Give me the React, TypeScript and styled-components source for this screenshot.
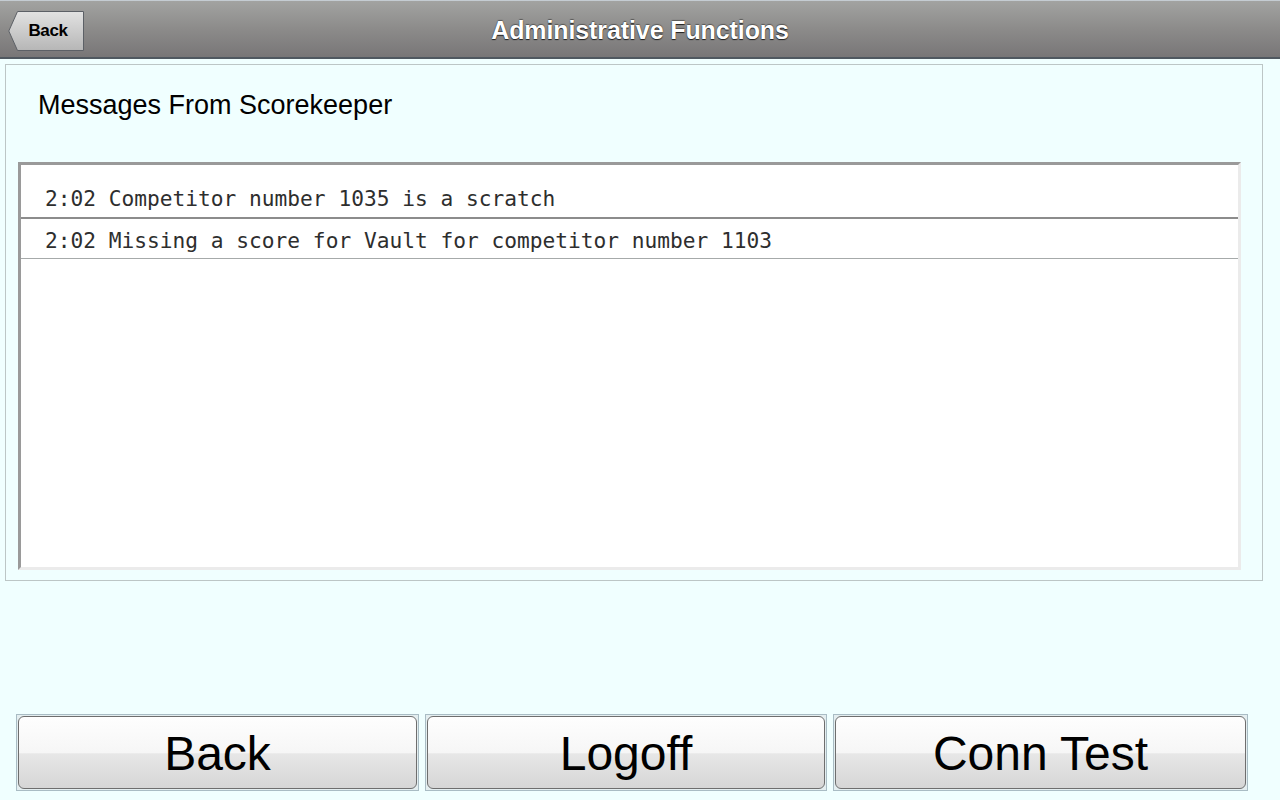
import React from 'react';
import styled, { createGlobalStyle } from 'styled-components';

const GlobalStyle = createGlobalStyle`
  html, body {
    margin: 0;
    padding: 0;
    background: #f0ffff;
  }
  * {
    box-sizing: border-box;
  }
`;

const Page = styled.div`
  display: flex;
  flex-direction: column;
  width: 1280px;
  height: 800px;
  background: #f0ffff;
  font-family: 'Liberation Sans', Arial, sans-serif;
  overflow: hidden;
`;

const TitleBar = styled.header`
  position: relative;
  display: flex;
  align-items: center;
  justify-content: center;
  height: 59px;
  flex-shrink: 0;
  border-top: 1px solid #c4ccd2;
  border-bottom: 2px solid #4f5860;
  background: linear-gradient(#a2a3a1, #8c8b8a 50%, #787677);
`;

const Title = styled.h1`
  margin: 2px 0 0 0;
  font-size: 25px;
  font-weight: 700;
  letter-spacing: -0.1px;
  color: #ffffff;
  text-shadow: 0 1px 1px rgba(0, 0, 0, 0.8), 0 -1px 1px rgba(0, 0, 0, 0.4);
`;

const NavBack = styled.button`
  position: absolute;
  left: 8px;
  top: 9px;
  width: 76px;
  height: 41px;
  padding: 0 0 0 4px;
  border: none;
  background: none;
  font-family: 'Liberation Sans', Arial, sans-serif;
  font-size: 17px;
  font-weight: 700;
  color: #000;
  cursor: pointer;
`;

const NavBackShape = styled.svg`
  position: absolute;
  left: 0;
  top: 0;
  z-index: 0;
`;

const NavBackLabel = styled.span`
  position: relative;
  z-index: 1;
  letter-spacing: -0.4px;
`;

const Panel = styled.section`
  display: flex;
  flex-direction: column;
  width: 1258px;
  height: 517px;
  margin: 5px 0 0 5px;
  border: 1px solid #bcc6c6;
  background: #f0ffff;
`;

const PanelTitle = styled.h2`
  margin: 0;
  padding: 25px 0 0 32px;
  height: 97px;
  font-size: 27px;
  font-weight: 400;
  letter-spacing: 0;
  color: #000;
`;

const MessageList = styled.ul`
  list-style: none;
  margin: 0 0 0 12px;
  padding: 13px 0 0 0;
  width: 1223px;
  height: 408px;
  border-style: solid;
  border-width: 3px;
  border-color: #9a9a9a #ebebeb #ebebeb #9a9a9a;
  background: #ffffff;
`;

const MessageRow = styled.li<{ $strong?: boolean }>`
  display: flex;
  align-items: center;
  height: ${(p) => (p.$strong ? '41px' : '40px')};
  padding: ${(p) => (p.$strong ? '2px' : '3px')} 0 0 24px;
  border-bottom: ${(p) => (p.$strong ? '2px solid #8c8c8c' : '1px solid #a6aaaa')};
  font-family: 'DejaVu Sans Mono', 'Liberation Mono', monospace;
  font-size: 21.2px;
  color: #2e2e2e;
  white-space: pre;
`;

const ButtonBar = styled.nav`
  display: flex;
  gap: 6px;
  margin: 133px 0 0 16px;
`;

const ButtonFrame = styled.button<{ $width: number }>`
  width: ${(p) => p.$width}px;
  height: 77px;
  padding: 1px;
  border: 1px solid #a9bcc4;
  background: #e4eef0;
  cursor: pointer;
`;

const ButtonFace = styled.span`
  display: flex;
  align-items: center;
  justify-content: center;
  width: 100%;
  height: 100%;
  border: 1px solid #6e6e6e;
  border-radius: 6px;
  background: linear-gradient(#fefefe, #f6f6f6 50%, #e7e7e7 52%, #d6d6d6);
  font-family: 'Liberation Sans', Arial, sans-serif;
  font-size: 48px;
  color: #000;
  padding-top: 2px;
`;

const messages = [
  '2:02 Competitor number 1035 is a scratch',
  '2:02 Missing a score for Vault for competitor number 1103',
];

const actions = [
  { label: 'Back', width: 403 },
  { label: 'Logoff', width: 402 },
  { label: 'Conn Test', width: 415 },
];

export default function App() {
  return (
    <Page>
      <GlobalStyle />
      <TitleBar>
        <NavBack>
          <NavBackShape width="76" height="42" viewBox="0 0 76 42">
            <defs>
              <linearGradient id="navBackFill" x1="0" y1="0" x2="0" y2="1">
                <stop offset="0" stopColor="#e2e2e2" />
                <stop offset="1" stopColor="#b6b6b6" />
              </linearGradient>
            </defs>
            <path
              d="M9.5 1.5 H75.5 V40.5 H9.5 L0.8 21 Z"
              fill="url(#navBackFill)"
              stroke="#5c6066"
              strokeWidth="1"
            />
          </NavBackShape>
          <NavBackLabel>Back</NavBackLabel>
        </NavBack>
        <Title>Administrative Functions</Title>
      </TitleBar>

      <Panel>
        <PanelTitle>Messages From Scorekeeper</PanelTitle>
        <MessageList>
          {messages.map((m, i) => (
            <MessageRow key={m} $strong={i === 0}>
              {m}
            </MessageRow>
          ))}
        </MessageList>
      </Panel>

      <ButtonBar>
        {actions.map((a) => (
          <ButtonFrame key={a.label} $width={a.width}>
            <ButtonFace>{a.label}</ButtonFace>
          </ButtonFrame>
        ))}
      </ButtonBar>
    </Page>
  );
}
